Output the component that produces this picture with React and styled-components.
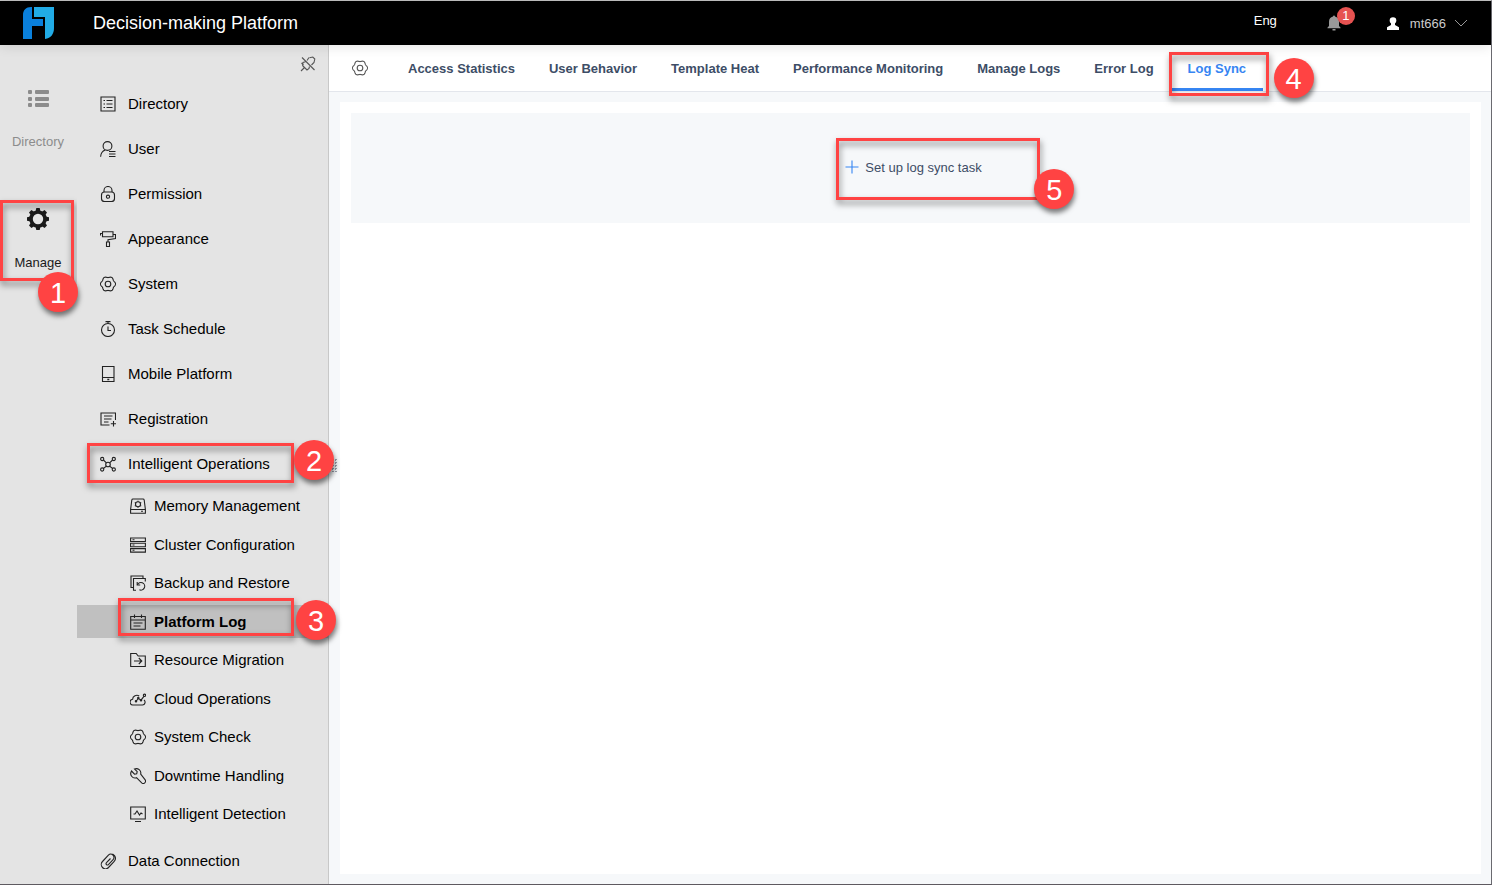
import React, { useState } from 'react';
import styled, { createGlobalStyle, css } from 'styled-components';

const GlobalStyle = createGlobalStyle`
  * {
    box-sizing: border-box;
  }

  body {
    margin: 0;
    font-family: "Liberation Sans", Arial, sans-serif;
    font-size: 13px;
    color: #3d4d66;
  }

  button {
    font: inherit;
    color: inherit;
    background: none;
    border: none;
    padding: 0;
    cursor: pointer;
  }
`;

const Shell = styled.div`
  display: flex;
  flex-direction: column;
  min-height: 100vh;
  border-top: 1px solid #c4c4c4;
  border-right: 1px solid #6a6a70;
  border-bottom: 1px solid #5e5a60;
`;

const Header = styled.header`
  display: flex;
  align-items: center;
  height: 44px;
  padding: 0 23px 0 22px;
  background: #000;
  color: #fff;
  box-shadow: 0 1px 12px rgba(0, 0, 0, 0.12);
  position: relative;
  z-index: 1;
`;

const Title = styled.h1`
  flex: 1;
  margin: 0 0 0 38px;
  font-size: 18px;
  font-weight: 400;
  line-height: 24px;
`;

const Language = styled.button`
  margin: 0 50px 5px 0;
`;

const BellButton = styled.button`
  position: relative;
  display: flex;
  margin-right: 46px;
  color: #999;
`;

const Count = styled.span`
  position: absolute;
  left: 10px;
  top: -8px;
  width: 18px;
  height: 18px;
  border-radius: 9px;
  background: #e65251;
  color: #fff;
  font-size: 13px;
  line-height: 18px;
  text-align: center;
`;

const UserButton = styled.button`
  display: flex;
  align-items: center;
  color: #ccc;

  span {
    margin: 0 8px 0 11px;
  }
`;

const Body = styled.div`
  flex: 1;
  display: flex;
`;

const Rail = styled.nav`
  display: flex;
  flex-direction: column;
  gap: 38px;
  width: 77px;
  padding-top: 36px;
  background: #e4e4e4;
`;

const RailItem = styled.button`
  position: relative;
  display: flex;
  flex-direction: column;
  align-items: center;
  gap: 25px;
  width: 76px;
  height: 81px;
  padding-top: 8px;
  color: ${props => props.$active ? '#1a1a1a' : '#8c8c8c'};
`;

const Menu = styled.nav`
  position: relative;
  width: 252px;
  background: #e4e4e4;
  border-right: 1px solid #c8c8c8;
  color: #000;
`;

const PinRow = styled.div`
  display: flex;
  justify-content: flex-end;
  height: 36px;
  padding: 11px 12px 0 0;
  color: #333;
`;

const MenuList = styled.ul`
  list-style: none;
  margin: 0;
  padding: 0;
`;

const rowText = css`
  display: flex;
  align-items: center;
  width: 100%;
  font-size: 15px;
  text-align: left;

  svg {
    flex: none;
    color: #222;
  }
`;

const MenuItem = styled.li`
  position: relative;
`;

const MenuButton = styled.button`
  ${rowText}
  gap: 12px;
  height: 45px;
  padding-left: 23px;
`;

const SubList = styled(MenuList)`
  display: flex;
  flex-direction: column;
  gap: 5px;
  margin: 3px 0 7px;
`;

const SubItem = styled.li`
  position: relative;

  &:nth-child(odd) {
    margin-bottom: 1px;
  }
`;

const SubButton = styled.button`
  ${rowText}
  gap: 8px;
  height: 33px;
  padding-left: 53px;
  background: ${props => props.$active ? '#c0c0c0' : 'transparent'};
  font-weight: ${props => props.$active ? 700 : 400};
`;

const ResizeHandle = styled.div`
  position: absolute;
  right: -9px;
  top: 414px;
  width: 6px;
  height: 13px;
  background-image: conic-gradient(#98a1ad 25%, transparent 0);
  background-size: 3px 3px;
`;

const Main = styled.main`
  flex: 1;
  display: flex;
  flex-direction: column;
  min-width: 0;
  background: #f6f8fa;
`;

const TabBar = styled.div`
  display: flex;
  align-items: center;
  height: 47px;
  padding-left: 23px;
  background: #fff;
  border-bottom: 1px solid #e3e6ec;
`;

const IconButton = styled.button`
  display: flex;
  color: #555;
`;

const Tabs = styled.div`
  display: flex;
  height: 100%;
  margin-left: 23px;
`;

const TabCell = styled.div`
  position: relative;
`;

const Tab = styled.button`
  height: 46px;
  padding: 3px 17px 0;
  font-weight: 700;
  white-space: nowrap;
  color: ${props => props.$active ? '#3685f2' : '#3d4d66'};
  border-bottom: 3px solid ${props => props.$active ? '#3685f2' : 'transparent'};
`;

const Page = styled.section`
  flex: 1;
  margin: 10px 10px 10px 11px;
  padding: 11px;
  background: #fff;
`;

const EmptyState = styled.div`
  display: flex;
  align-items: center;
  justify-content: center;
  height: 110px;
  background: #f6f8fa;
`;

const SetupButton = styled.button`
  position: relative;
  display: flex;
  align-items: center;
  gap: 5px;
  padding: 7px 0 9px 5px;

  svg {
    color: #3685f2;
  }
`;

const Frame = styled.span`
  position: absolute;
  left: ${props => props.$left}px;
  top: ${props => props.$top}px;
  width: ${props => props.$width}px;
  height: ${props => props.$height}px;
  border: 3px solid #ff4343;
  filter: drop-shadow(1px 4px 3px rgba(0, 0, 0, 0.5));
  pointer-events: none;
`;

const Step = styled.span`
  position: absolute;
  z-index: 2;
  left: ${props => props.$left}px;
  top: ${props => props.$top}px;
  width: 40px;
  height: 40px;
  border-radius: 50%;
  background: #ff4343;
  box-shadow: 1px 4px 5px rgba(0, 0, 0, 0.5);
  color: #fff;
  font-size: 29px;
  font-weight: 400;
  line-height: 42px;
  text-align: center;
  pointer-events: none;
`;

function Callout({ number, frame, step }) {
  return (
    <>
      <Frame $left={frame[0]} $top={frame[1]} $width={frame[2]} $height={frame[3]} />
      <Step $left={step[0]} $top={step[1]}>{number}</Step>
    </>
  );
}

// outline with six rounded lobes
const gearPoints = Array.from({ length: 72 }, (_, i) => {
  const angle = (i * Math.PI) / 36;
  const radius = 7 + 0.6 * Math.cos(6 * angle);
  return `${(8 + radius * Math.cos(angle)).toFixed(2)},${(8 + radius * Math.sin(angle)).toFixed(2)}`;
}).join(' ');

const drawings = {
  directory: (
    <>
      <path d="M1 1h14v14H1z" />
      <path d="M3.500 4.500h1.500M6.500 4.500h6M3.500 8h1.500M6.500 8h6M3.500 11.500h1.500M6.500 11.500h6" />
    </>
  ),
  user: (
    <>
      <circle cx="7.500" cy="5" r="4.400" />
      <path d="M.6 15.800c.2-3.500 1.800-5.800 4.600-6.800M9 10.500h6.500M9 13h6.500M9 15.500h6.500" />
    </>
  ),
  permission: (
    <>
      <rect x="1.500" y="6" width="13" height="9.500" rx="3" />
      <path d="M4 6V4.500a4 4 0 0 1 8 0V6" />
      <circle cx="8" cy="10.700" r="1.600" />
    </>
  ),
  appearance: (
    <path d="M2.500.8h10.500v5H2.500zM2.500 2.500H.5v2M13 3.500h2.500v4L8 8.800V11M6.500 11h3v4.500h-3z" />
  ),
  system: (
    <>
      <polygon points={gearPoints} />
      <circle cx="8" cy="8" r="2.800" />
    </>
  ),
  task: (
    <>
      <circle cx="8" cy="9" r="6.500" />
      <path d="M5.500.6h5M8 .6v2M8 5.500v4h3" />
    </>
  ),
  mobile: (
    <>
      <path d="M2.500.5h11.500v15H2.500zM2.500 11.500H14" />
      <path d="M7.300 13.500h2" strokeWidth="1.500" />
    </>
  ),
  registration: (
    <path d="M9.500 14H1V2h14.500v7M4 5h8.500M4 8h7.500M4 11h4.500M13.500 10v5.500M10.800 12.800h5.200" />
  ),
  operations: (
    <>
      <circle cx="8" cy="8.500" r="2.300" />
      <circle cx="2.200" cy="3" r="1.600" />
      <circle cx="13.800" cy="3" r="1.600" />
      <circle cx="2.200" cy="13.500" r="1.600" />
      <circle cx="13.800" cy="13.500" r="1.600" />
      <path d="m3.400 4 3 2.900M12.600 4l-3 2.900M3.400 12.500l3-2.400M12.600 12.500l-3-2.400" />
    </>
  ),
  memory: (
    <>
      <path d="M3 1h10q1 0 1.200 1l1.200 9.500v3.700H.6v-3.700L1.800 2Q2 1 3 1M.7 11.500h14.600M11 13.300h2" />
      <circle cx="8" cy="6.300" r="2.500" />
      <path d="M8 2.800v1M8 8.800v1M4.800 4.500l1 .6M10.200 7.500l1 .6M4.800 8.100l1-.6M10.200 5.100l1-.6" />
    </>
  ),
  cluster: (
    <path d="M.6 1h14.800v3.500H.6zM.6 6.300h14.800v3.500H.6zM.6 11.600h14.800v3.500H.6zM2.500 2.800h2M2.500 8h2M2.500 13.300h2" />
  ),
  backup: (
    <>
      <path d="M3.500 12.500H1V1h12v2.500M6 15.300H3.500V3.500h11.800v3M7.200 7v3h3" />
      <path d="M7.400 9.800a3.800 3.800 0 1 1 2 5" />
    </>
  ),
  log: (
    <path d="M.7 2.500h14.600v12.800H.7zM.7 6h14.600M4.500.5v3.500M11.500.5v3.500M3.500 9h9M3.500 12h7" />
  ),
  resource: (
    <path d="M.7 14.500V1.500h5.500l2 2.500h7.100v10.500zM4 9h7.500M8.800 6l3 3-3 3" />
  ),
  cloud: (
    <>
      <path d="M14 9a2.800 2.800 0 0 1-1.500 5H3.400A2.900 2.900 0 0 1 2.600 8.200C2.700 5 6.600 3.200 9.200 5" />
      <path d="m6.300 10 2-2.600 2.700 1.800 3.300-4.400" />
      <circle cx="6" cy="10.200" r=".7" />
      <circle cx="8.300" cy="7" r=".7" />
      <circle cx="11" cy="9.300" r=".7" />
      <circle cx="14.500" cy="4.300" r="1.200" />
    </>
  ),
  wrench: (
    <path d="M1.500 3 4.500 6.200l2.200-.5.500-2L4.500.9c3.500-1.200 7 1.400 6.200 5.100l4.300 5.700c1.700 2.200-1.200 5-3.300 3.100L6.500 9.700C2.500 11-.8 6.800 1.500 3z" />
  ),
  detection: (
    <path d="M.7 1h14.600v12H.7zM5 15.500h6M3.500 8h1.500L7 5l2.500 4 1.500-2 1.500 1" />
  ),
  connection: (
    <path d="M10.500 5.500 6.500 9.700a1.300 1.300 0 0 0 1.900 1.900l4.700-5A3.200 3.200 0 0 0 8.400 2.200L2.500 8.500a4.200 4.200 0 0 0 6 6L14 8.700A5 5 0 0 0 14.500 2.500L12.500.8" />
  ),
  plus: <path d="M8 1.500v13M1.500 8h13" />,
  unpin: (
    <path d="M2 1.500l12.500 12.500M1 15l3.500-3.500M2.500 9.500l4.500 4.500 2-1.500.5-2M2.500 9.500l.5-3 2.500-.8M7 4.500l2-3M11.500 9l2.500-2.500.8-3.500-2-2-3.300.8M1.500 7l2 2" />
  ),
};

function Icon({ name, size = 16 }) {
  return (
    <svg width={size} height={size} viewBox="0 0 16 16" fill="none" stroke="currentColor" strokeWidth="1.1" aria-hidden="true">
      {drawings[name]}
    </svg>
  );
}

function Logo() {
  return (
    <svg width="33" height="34" viewBox="0 0 33 34" aria-hidden="true">
      <path fill="#0a80dc" d="M1 33V9c0-5 3-8 8-8h1v12h11v2.500v4.500H10v13z" />
      <path fill="#21abe6" d="M12 1h20v21c0 6-3 10-9 11V11H12z" />
    </svg>
  );
}

function ListIcon() {
  return (
    <svg width="22" height="20" viewBox="0 0 22 20" fill="currentColor" aria-hidden="true">
      {[1, 8, 14].map(y => (
        <React.Fragment key={y}>
          <rect x="1" y={y} width="4" height="4" rx="1" />
          <rect x="8" y={y} width="14" height="4" rx="1" />
        </React.Fragment>
      ))}
    </svg>
  );
}

function GearIcon() {
  return (
    <svg width="22" height="22" viewBox="0 0 22 22" aria-hidden="true">
      <circle cx="11" cy="11" r="7" fill="none" stroke="currentColor" strokeWidth="3.600" />
      {[0, 45, 90, 135, 180, 225, 270, 315].map(angle => (
        <path key={angle} fill="currentColor" d="M8.500 3.500 9.300 0h3.400l.8 3.500z" transform={`rotate(${angle} 11 11)`} />
      ))}
    </svg>
  );
}

const menuItems = [
  { icon: 'directory', label: 'Directory' },
  { icon: 'user', label: 'User' },
  { icon: 'permission', label: 'Permission' },
  { icon: 'appearance', label: 'Appearance' },
  { icon: 'system', label: 'System' },
  { icon: 'task', label: 'Task Schedule' },
  { icon: 'mobile', label: 'Mobile Platform' },
  { icon: 'registration', label: 'Registration' },
  {
    icon: 'operations',
    label: 'Intelligent Operations',
    callout: { number: 2, frame: [10, 2, 207, 40], step: [217, -1] },
    children: [
      { icon: 'memory', label: 'Memory Management' },
      { icon: 'cluster', label: 'Cluster Configuration' },
      { icon: 'backup', label: 'Backup and Restore' },
      { icon: 'log', label: 'Platform Log', callout: { number: 3, frame: [41, -7, 176, 38], step: [219, -5] } },
      { icon: 'resource', label: 'Resource Migration' },
      { icon: 'cloud', label: 'Cloud Operations' },
      { icon: 'system', label: 'System Check' },
      { icon: 'wrench', label: 'Downtime Handling' },
      { icon: 'detection', label: 'Intelligent Detection' },
    ],
  },
  { icon: 'connection', label: 'Data Connection' },
];

const tabs = [
  'Access Statistics',
  'User Behavior',
  'Template Heat',
  'Performance Monitoring',
  'Manage Logs',
  'Error Log',
  'Log Sync',
];

function SideMenu() {
  const [selected, setSelected] = useState('Platform Log');

  return (
    <Menu aria-label="Manage">
      <PinRow>
        <IconButton aria-label="Unpin menu"><Icon name="unpin" /></IconButton>
      </PinRow>
      <MenuList>
        {menuItems.map(item => (
          <MenuItem key={item.label}>
            <MenuButton>
              <Icon name={item.icon} />
              {item.label}
            </MenuButton>
            {item.callout && <Callout {...item.callout} />}
            {item.children && (
              <SubList>
                {item.children.map(child => (
                  <SubItem key={child.label}>
                    <SubButton $active={selected === child.label} onClick={() => setSelected(child.label)}>
                      <Icon name={child.icon} />
                      {child.label}
                    </SubButton>
                    {child.callout && <Callout {...child.callout} />}
                  </SubItem>
                ))}
              </SubList>
            )}
          </MenuItem>
        ))}
      </MenuList>
      <ResizeHandle />
    </Menu>
  );
}

function App() {
  const [tab, setTab] = useState('Log Sync');

  return (
    <>
      <GlobalStyle />
      <Shell>
        <Header>
          <Logo />
          <Title>Decision-making Platform</Title>
          <Language>Eng</Language>
          <BellButton aria-label="Notifications">
            <svg width="14" height="16" viewBox="0 0 14 16" fill="currentColor" aria-hidden="true">
              <path d="M6 1.500a1 1 0 0 1 2 0c2.500.5 4 2.500 4 5V11l1.500 1.500v.8H.5v-.8L2 11V6.500c0-2.500 1.500-4.500 4-5zM5.500 14h3v1.500h-3z" />
            </svg>
            <Count>1</Count>
          </BellButton>
          <UserButton>
            <svg width="12" height="13" viewBox="0 0 12 13" fill="#fff" aria-hidden="true">
              <circle cx="6" cy="3.500" r="3.300" />
              <path d="M4 6h4v2l4 2.200V13H0v-2.800L4 8z" />
            </svg>
            <span>mt666</span>
            <svg width="14" height="8" viewBox="0 0 14 8" fill="none" stroke="#999" aria-hidden="true">
              <path d="m1 1 6 6 6-6" />
            </svg>
          </UserButton>
        </Header>
        <Body>
          <Rail aria-label="Modules">
            <RailItem>
              <ListIcon />
              Directory
            </RailItem>
            <RailItem $active>
              <GearIcon />
              Manage
              <Callout number={1} frame={[0, 0, 74, 81]} step={[38, 72]} />
            </RailItem>
          </Rail>
          <SideMenu />
          <Main>
            <TabBar>
              <IconButton aria-label="Settings"><Icon name="system" /></IconButton>
              <Tabs role="tablist">
                {tabs.map(name => (
                  <TabCell key={name} role="presentation">
                    <Tab role="tab" aria-selected={tab === name} $active={tab === name} onClick={() => setTab(name)}>
                      {name}
                    </Tab>
                    {name === 'Log Sync' && <Callout number={4} frame={[-2, 7, 100, 44]} step={[103, 13]} />}
                  </TabCell>
                ))}
              </Tabs>
            </TabBar>
            <Page>
              <EmptyState>
                <SetupButton>
                  <Icon name="plus" />
                  Set up log sync task
                  <Callout number={5} frame={[-3, -14, 204, 62]} step={[195, 17]} />
                </SetupButton>
              </EmptyState>
            </Page>
          </Main>
        </Body>
      </Shell>
    </>
  );
}

export default App;
